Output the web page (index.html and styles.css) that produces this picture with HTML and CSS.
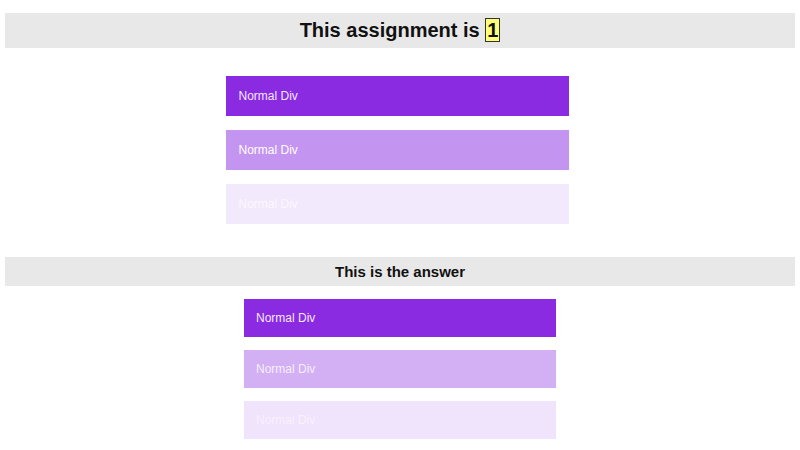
FILE: index.html
```html
<!DOCTYPE html>
<html>
<head>
<meta charset="utf-8">
<link rel="stylesheet" href="styles.css">
</head>
<body>
<h1 class="title">This assignment is <span class="hl">1</span></h1>
<section class="list list-a">
  <div class="box c1">Normal Div</div>
  <div class="box c2">Normal Div</div>
  <div class="box c3">Normal Div</div>
</section>
<h2 class="subtitle">This is the answer</h2>
<section class="list list-b">
  <div class="box c1">Normal Div</div>
  <div class="box c2b">Normal Div</div>
  <div class="box c3b">Normal Div</div>
</section>
</body>
</html>
```
FILE: styles.css
```css
html, body { margin: 0; padding: 0; background: #fff; }
body {
  font-family: "Liberation Sans", Arial, sans-serif;
  padding: 13px 5px 0;
}
.title {
  margin: 0;
  height: 35px;
  line-height: 35px;
  background: #e8e8e8;
  text-align: center;
  font-size: 20px;
  font-weight: bold;
  color: #111;
}
.hl {
  background: #ffff7a;
  border: 1px solid #333;
  padding: 0 1px;
}
.list {
  display: flex;
  flex-direction: column;
  align-items: center;
}
.list-a { margin-top: 28px; gap: 14px; padding-right: 6px; }
.list-a .box { width: 330px; height: 40px; padding-left: 13px; line-height: 40px; }
.subtitle {
  margin: 33px 0 0;
  height: 29px;
  line-height: 29px;
  background: #e8e8e8;
  text-align: center;
  font-size: 15px;
  font-weight: bold;
  color: #111;
}
.list-b { margin-top: 13px; gap: 13px; }
.list-b .box { width: 300px; height: 38px; padding-left: 12px; line-height: 38px; }
.box {
  font-size: 12px;
  color: #fff;
}
.c1 { background: #8a2be2; color: #f4e8ff; }
.c2 { background: #c495f0; }
.c3 { background: #f3e9fc; color: #fbf7ff; }
.c2b { background: #d3b0f4; color: #f6eefe; }
.c3b { background: #f0e3fc; color: #f8f1fe; }
```
